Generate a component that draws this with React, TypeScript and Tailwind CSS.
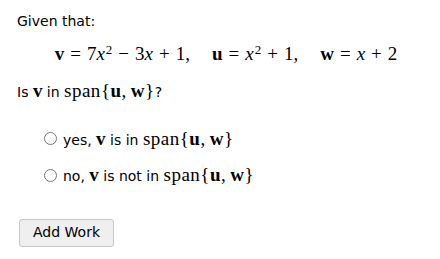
const ui = { fontFamily: '"DejaVu Sans", Verdana, sans-serif' };
const mathFont = { fontFamily: '"Liberation Serif", "DejaVu Serif", serif' };

function V({ c }: { c: string }) {
  return <b className="font-bold">{c}</b>;
}

function I({ c }: { c: string }) {
  return <i className="italic">{c}</i>;
}

function Op({ c }: { c: string }) {
  return <span className="inline-block mx-[6px]">{c}</span>;
}

function Sq() {
  return <sup className="text-[13px] ml-[1px]">2</sup>;
}

function Span() {
  return (
    <span style={mathFont} className="text-[19px] tracking-[0.5px]">
      span{'{'}
      <V c="u" />,<span className="ml-[4px]" />
      <V c="w" />
      {'}'}
    </span>
  );
}

function Vec() {
  return (
    <span style={mathFont} className="text-[19px]">
      <V c="v" />
    </span>
  );
}

function Option({ children }: { children: React.ReactNode }) {
  return (
    <label className="flex items-center gap-[6px]">
      <input type="radio" name="ans" className="w-[13px] h-[13px] m-0 accent-gray-500" />
      <span className="text-[14px] text-black">{children}</span>
    </label>
  );
}

export default function App() {
  return (
    <div className="w-[440px] h-[259px] bg-white text-black px-[17px] pt-[12px]" style={ui}>
      <p className="text-[14px] leading-[18px]">Given that:</p>

      <div
        style={mathFont}
        className="text-[19px] leading-[24px] mt-[12px] flex justify-center pl-[12px] gap-[22px]"
      >
        <span>
          <V c="v" />
          <Op c="=" />7<I c="x" />
          <Sq />
          <Op c="−" />3<I c="x" />
          <Op c="+" />1,
        </span>
        <span>
          <V c="u" />
          <Op c="=" />
          <I c="x" />
          <Sq />
          <Op c="+" />1,
        </span>
        <span>
          <V c="w" />
          <Op c="=" />
          <I c="x" />
          <Op c="+" />2
        </span>
      </div>

      <p className="text-[14px] mt-[11px]">
        Is <Vec /> in <Span />?
      </p>

      <div className="pl-[27px] mt-[19px] flex flex-col gap-[8px]">
        <Option>
          yes, <Vec /> is in <Span />
        </Option>
        <Option>
          no, <Vec /> is not in <Span />
        </Option>
      </div>

      <button className="mt-[29px] ml-[2px] w-[95px] h-[28px] bg-[#efefef] border border-[#c8c8c8] rounded-[3px] text-[14px] text-black">
        Add Work
      </button>
    </div>
  );
}
